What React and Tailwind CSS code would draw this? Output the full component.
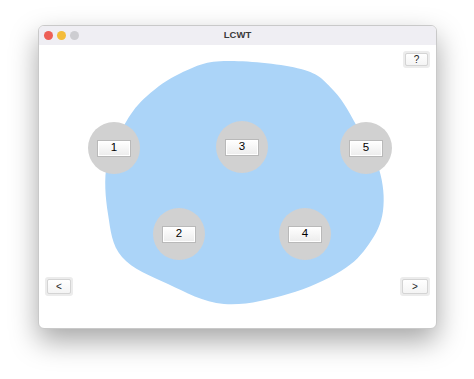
import React from 'react';

const nodes = [
  { id: 1, pos: 'left-[49px] top-[77px]' },
  { id: 3, pos: 'left-[177px] top-[76px]' },
  { id: 5, pos: 'left-[301px] top-[77px]' },
  { id: 2, pos: 'left-[114px] top-[163px]' },
  { id: 4, pos: 'left-[240px] top-[163px]' },
];

const blobPts = [
  [223, 60], [300, 68], [333, 90], [357, 127], [378, 168], [382, 210], [368, 243],
  [340, 270], [287, 293], [223, 303], [167, 283], [121, 256], [107, 213], [106, 162],
  [125, 121], [146, 95], [180, 72],
];

// closed catmull-rom -> cubic bezier
function smoothPath(pts, t = 0.35) {
  const n = pts.length;
  let d = `M${pts[0][0]},${pts[0][1]}`;
  for (let i = 0; i < n; i++) {
    const p0 = pts[(i - 1 + n) % n];
    const p1 = pts[i];
    const p2 = pts[(i + 1) % n];
    const p3 = pts[(i + 2) % n];
    const c1 = [p1[0] + (p2[0] - p0[0]) * t / 2, p1[1] + (p2[1] - p0[1]) * t / 2];
    const c2 = [p2[0] - (p3[0] - p1[0]) * t / 2, p2[1] - (p3[1] - p1[1]) * t / 2];
    d += ` C${c1[0]},${c1[1]} ${c2[0]},${c2[1]} ${p2[0]},${p2[1]}`;
  }
  return d + 'Z';
}

function MacButton({ label, className = '' }) {
  return (
    <div className={`p-[2px] bg-[#ececec] rounded-[3px] ${className}`}>
      <div className="h-full w-full flex items-center justify-center rounded-[2px] border border-[#d4d4d4] bg-gradient-to-b from-white to-[#f4f4f4] text-[10px] text-[#222] leading-none">
        {label}
      </div>
    </div>
  );
}

function NodeButton({ label }) {
  return (
    <div className="w-[34px] h-[17px] flex items-center justify-center border border-[#b9b9b9] bg-gradient-to-b from-white to-[#ececec] shadow-[inset_0_0_0_1px_#ffffff] text-[11.5px] text-black leading-none">
      {label}
    </div>
  );
}

export default function App() {
  return (
    <div className="w-[474px] h-[379px] bg-white pt-[25px] pl-[38px] font-['Liberation_Sans',Arial,sans-serif]">
      <div className="w-[399px] h-[304px] flex flex-col rounded-[6px] overflow-hidden border border-[#c9c9c9] bg-white shadow-[0_12px_28px_rgba(0,0,0,0.35)]">
        {/* Title bar */}
        <div className="relative h-[19px] shrink-0 flex items-center bg-[#efeef3] px-[4px]">
          <div className="flex items-center gap-[4px] pl-[1px]">
            <span className="w-[9px] h-[9px] rounded-full bg-[#ed5f56]" />
            <span className="w-[9px] h-[9px] rounded-full bg-[#f4bc3a]" />
            <span className="w-[9px] h-[9px] rounded-full bg-[#cdcdd1]" />
          </div>
          <div className="absolute inset-0 flex items-center justify-center text-[9.5px] font-bold text-[#3a3a3a]">
            LCWT
          </div>
        </div>

        {/* Content */}
        <div className="relative flex-1 flex flex-col justify-between px-[6px] pt-[6px] pb-[32px]">
          <svg className="absolute inset-0" width="399" height="285" viewBox="38 44 399 285">
            <path d={smoothPath(blobPts)} fill="#abd4f8" />
          </svg>

          {nodes.map(n => (
            <div
              key={n.id}
              className={`absolute ${n.pos} w-[52px] h-[52px] rounded-full bg-[#d1d1d1] flex items-center justify-center`}
            >
              <NodeButton label={n.id} />
            </div>
          ))}

          <div className="relative flex justify-end">
            <MacButton label="?" className="w-[27px] h-[17px]" />
          </div>
          <div className="relative flex justify-between">
            <MacButton label="<" className="w-[28px] h-[19px]" />
            <MacButton label=">" className="w-[30px] h-[19px]" />
          </div>
        </div>
      </div>
    </div>
  );
}
